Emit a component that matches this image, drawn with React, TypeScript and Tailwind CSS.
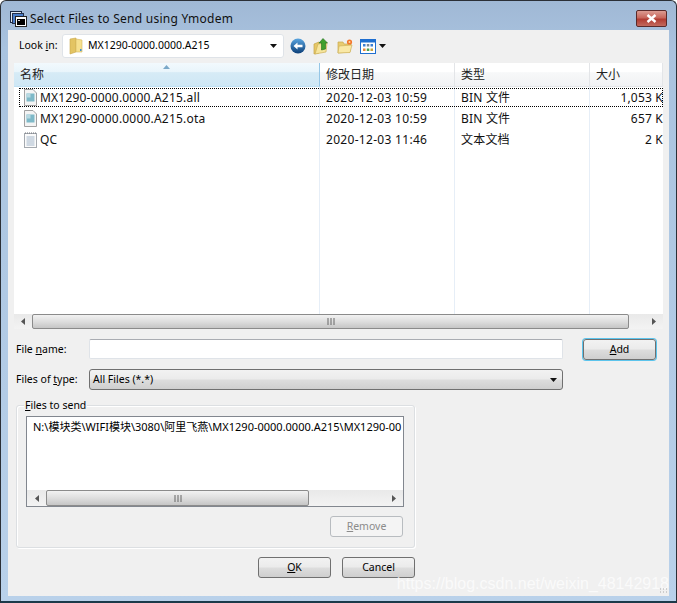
import type { ReactNode } from 'react';

type FileRow = {
    name: string
    date: string
    type: string
    size: string
    icon: 'bin' | 'text'
}

const files: FileRow[] = [
    { name: 'MX1290-0000.0000.A215.all', date: '2020-12-03 10:59', type: 'BIN 文件', size: '1,053 K', icon: 'bin' },
    { name: 'MX1290-0000.0000.A215.ota', date: '2020-12-03 10:59', type: 'BIN 文件', size: '657 K', icon: 'bin' },
    { name: 'QC', date: '2020-12-03 11:46', type: '文本文档', size: '2 K', icon: 'text' },
];

const columns = 'grid grid-cols-[306px_135px_135px_73px]';

const FolderIcon = () => (
    <svg width="14" height="18" viewBox="0 0 14 18">
        <path d="M1 2 L7 1 L7 15 L1 17 Z" fill="#e3c463" stroke="#c9a84a" strokeWidth="0.6" />
        <path d="M7 2 L13 3 L13 15 L7 15 Z" fill="#f6e08e" stroke="#d3b65e" strokeWidth="0.6" />
        <rect x="11" y="12" width="1.5" height="2" fill="#3d8fd0" />
    </svg>
);

const BackIcon = () => (
    <svg width="16" height="16" viewBox="0 0 16 16">
        <defs>
            <linearGradient id="back" x1="0" y1="0" x2="0" y2="1">
                <stop offset="0" stopColor="#5aa5e0" />
                <stop offset="1" stopColor="#0c3f78" />
            </linearGradient>
        </defs>
        <circle cx="8" cy="8" r="7.5" fill="url(#back)" />
        <path d="M3.5 8 L7.5 4.5 L7.5 6.8 L12.5 6.8 L12.5 9.2 L7.5 9.2 L7.5 11.5 Z" fill="#fff" />
    </svg>
);

const UpFolderIcon = () => (
    <svg width="16" height="17" viewBox="0 0 16 17">
        <path d="M1 6 L6 4 L6 15 L1 16 Z" fill="#e6c767" stroke="#c4a445" strokeWidth="0.7" />
        <path d="M5 6 L14 5 L13 14 L2 16 Z" fill="#f7e59c" stroke="#cdb058" strokeWidth="0.7" />
        <path d="M10 0.5 L14.5 5 L12.5 5 L12.5 11 L8.5 12 L8.5 5 L6 5 Z" fill="#3fa02e" stroke="#1f6d1c" strokeWidth="0.6" />
    </svg>
);

const NewFolderIcon = () => (
    <svg width="16" height="15" viewBox="0 0 16 15">
        <path d="M1 3 L6 3 L7 5 L14 5 L13 13 L1 14 Z" fill="#e8cb70" stroke="#c9aa4f" strokeWidth="0.7" />
        <path d="M2 7 L15 6 L13 13.5 L1 14 Z" fill="#f9e8a6" stroke="#d0b35c" strokeWidth="0.7" />
        <circle cx="12.5" cy="3" r="2.6" fill="#f2762b" />
        <circle cx="12.5" cy="3" r="1" fill="#ffd9a0" />
    </svg>
);

const ViewsIcon = () => (
    <svg width="16" height="15" viewBox="0 0 16 15">
        <rect x="0.5" y="0.5" width="15" height="14" fill="#fff" stroke="#1f6fd0" />
        <rect x="0.5" y="0.5" width="15" height="3" fill="#1f6fd0" />
        <rect x="3" y="5" width="2.5" height="2.5" fill="#3b7fd4" />
        <rect x="6.8" y="5" width="2.5" height="2.5" fill="#7a8796" />
        <rect x="10.5" y="5" width="2.5" height="2.5" fill="#3b7fd4" />
        <rect x="3" y="9.5" width="2.5" height="2.5" fill="#e8873a" />
        <rect x="6.8" y="9.5" width="2.5" height="2.5" fill="#4aa04a" />
        <rect x="10.5" y="9.5" width="2.5" height="2.5" fill="#c9a33a" />
    </svg>
);

const BinFileIcon = () => (
    <svg width="13" height="17" viewBox="0 0 13 17">
        <path d="M0.5 0.5 L9 0.5 L12.5 4 L12.5 16.5 L0.5 16.5 Z" fill="#f4f4f4" stroke="#a0a0a0" />
        <rect x="2.5" y="4.5" width="8" height="8" fill="#7fb9c8" />
        <rect x="2.5" y="4.5" width="4" height="4" fill="#b8d9e2" />
    </svg>
);

const TextFileIcon = () => (
    <svg width="13" height="16" viewBox="0 0 13 16">
        <rect x="0.5" y="1.5" width="12" height="14" fill="#fbfbfb" stroke="#a4a9af" />
        <path d="M1 1 H2 M3 1 H4 M5 1 H6 M7 1 H8 M9 1 H10 M11 1 H12" stroke="#70757b" />
        <path d="M2.5 5 H10.5 M2.5 7 H10.5 M2.5 9 H10.5 M2.5 11 H10.5 M2.5 13 H10.5" stroke="#a3b6ca" />
    </svg>
);

const AppIcon = () => (
    <svg width="17" height="16" viewBox="0 0 17 16">
        <rect x="0.5" y="0.5" width="11" height="11" fill="#dfe9f6" stroke="#1c2a44" />
        <rect x="2.5" y="2.5" width="11" height="10" fill="#4a7ecb" stroke="#24314c" />
        <rect x="5.5" y="5.5" width="11" height="10" fill="#fff" stroke="#222" />
        <rect x="7" y="8" width="8" height="6" fill="#000" />
        <rect x="8" y="9" width="2" height="1" fill="#ddd" />
    </svg>
);

const Caret = ({ left }: { left?: boolean }) => (
    <svg width="4" height="7" viewBox="0 0 4 7">
        <path d={left ? 'M4 0 L0 3.5 L4 7 Z' : 'M0 0 L4 3.5 L0 7 Z'} fill="#555" />
    </svg>
);

const DownCaret = () => (
    <svg width="7" height="4" viewBox="0 0 7 4">
        <path d="M0 0 H7 L3.5 4 Z" fill="#111" />
    </svg>
);

const Scrollbar = ({ buttonWidth, thumbWidth }: { buttonWidth: string; thumbWidth: string }) => (
    <div className="flex h-full items-stretch bg-gradient-to-b from-[#e9e9e9] to-[#f3f3f3]">
        <div className={`${buttonWidth} flex items-center justify-center`}><Caret left /></div>
        <div className={`${thumbWidth} flex items-center justify-center rounded-[2px] border border-[#8b8b8b] bg-gradient-to-b from-[#f2f2f2] via-[#dedede] to-[#c6c6c6]`}>
            <svg width="8" height="7" viewBox="0 0 8 7">
                <path d="M1 0 V7 M4 0 V7 M7 0 V7" stroke="#666" />
            </svg>
        </div>
        <div className="flex-1" />
        <div className="flex w-[18px] items-center justify-center"><Caret /></div>
    </div>
);

const DialogButton = ({ children, className = '' }: { children: ReactNode; className?: string }) => (
    <div className={`flex h-[21px] w-[73px] items-center justify-center rounded-[3px] border border-[#707070] bg-[linear-gradient(to_bottom,#f2f2f2_0%,#ebebeb_48%,#dddddd_52%,#cfcfcf_100%)] text-[10.5px] text-black ${className}`}>
        {children}
    </div>
);

const HeaderCell = ({ label, sorted }: { label: string; sorted?: boolean }) => (
    <div className={`relative flex h-[24px] items-center border-b pl-[6px] text-[12px] text-[#222] ${sorted
        ? 'border-r border-b-[#bfe0f3] border-r-[#95c6e6] bg-[linear-gradient(to_bottom,#f2f9fd_0%,#e9f5fb_38%,#d6ebf6_42%,#cfe7f5_100%)]'
        : 'border-r border-b-[#e3e5e8] border-r-[#e3e5e8] bg-[linear-gradient(to_bottom,#ffffff_0%,#ffffff_38%,#f7f8f9_42%,#f1f2f4_100%)]'}`}>
        {sorted && (
            <svg className="absolute left-[149px] top-[2px]" width="7" height="4" viewBox="0 0 7 4">
                <path d="M3.5 0 L7 4 H0 Z" fill="#7aa8c8" />
            </svg>
        )}
        {label}
    </div>
);

const App = () => {
    return (
        <div className="relative flex h-[603px] w-[677px] flex-col overflow-hidden rounded-t-[6px] border border-b-2 border-[#2b2f36] border-b-[#1c3a4a] bg-[linear-gradient(to_bottom,#a0b8d5_0%,#a9c3df_8%,#b9d1ea_100%)] px-[7px] pb-[5px] font-['Noto_Sans','Noto_Sans_CJK_SC',sans-serif] text-black">
            {/* title bar */}
            <div className="flex h-[29px] shrink-0 items-center pt-[6px]">
                <div className="ml-[2px] mr-[3px] flex"><AppIcon /></div>
                <span className="text-[12px] leading-none tracking-[0.25px] text-[#111]">Select Files to Send using Ymodem</span>
                <div className="ml-auto mr-[2px] flex h-[17px] w-[31px] items-center justify-center rounded-[2px] border border-[#5a2a2a] bg-[linear-gradient(to_bottom,#dc9c92_0%,#c8675c_45%,#b13c32_55%,#c26a5e_100%)]">
                    <svg width="11" height="9" viewBox="0 0 11 9">
                        <path d="M1.5 1 L9.5 8 M9.5 1 L1.5 8" stroke="#fff" strokeWidth="2.4" />
                    </svg>
                </div>
            </div>

            {/* client area */}
            <div className="flex flex-1 flex-col bg-[#f0f0f0] px-[6px] text-[10.5px]">
                {/* toolbar */}
                <div className="flex h-[33px] shrink-0 items-center pb-[1px]">
                    <span className="ml-[5px] w-[43px]">Look <u>i</u>n:</span>
                    <div className="flex h-[24px] w-[222px] items-center rounded-[3px] border border-[#dfe3e8] bg-white pl-[6px] pr-[4px]">
                        <FolderIcon />
                        <span className="ml-[5px] text-[10.5px]">MX1290-0000.0000.A215</span>
                        <span className="ml-auto mr-[2px] flex"><DownCaret /></span>
                    </div>
                    <span className="ml-[6px] flex"><BackIcon /></span>
                    <span className="ml-[7px] flex"><UpFolderIcon /></span>
                    <span className="ml-[8px] flex"><NewFolderIcon /></span>
                    <span className="ml-[7px] flex"><ViewsIcon /></span>
                    <span className="ml-[3px] flex"><DownCaret /></span>
                </div>

                {/* file list */}
                <div className="flex h-[251px] w-[649px] shrink-0 flex-col bg-white">
                    <div className={columns}>
                        <HeaderCell label="名称" sorted />
                        <HeaderCell label="修改日期" />
                        <HeaderCell label="类型" />
                        <HeaderCell label="大小" />
                    </div>
                    {files.map((file, index) => (
                        <div key={file.name} className={`${columns} relative ${index === 2 ? 'h-[22px]' : 'h-[21px]'} text-[12px] tracking-[0.2px] text-[#111]`}>
                            {index === 0 && <div className="absolute bottom-[1px] left-[5px] right-0 top-[1px] border border-dotted border-black" />}
                            <div className="flex items-center border-r border-[#e6eef7] pl-[10px]">
                                {file.icon === 'bin' ? <BinFileIcon /> : <TextFileIcon />}
                                <span className="ml-[3px]">{file.name}</span>
                            </div>
                            <div className="flex items-center border-r border-[#e6eef7] pl-[6px] tracking-[0.3px]">{file.date}</div>
                            <div className="flex items-center border-r border-[#e6eef7] pl-[6px]">{file.type}</div>
                            <div className="flex items-center justify-end">{file.size}</div>
                        </div>
                    ))}
                    <div className={`${columns} flex-1`}>
                        <div className="border-r border-[#e6eef7]" />
                        <div className="border-r border-[#e6eef7]" />
                        <div className="border-r border-[#e6eef7]" />
                        <div />
                    </div>
                </div>
                <div className="h-[15px] w-[649px] shrink-0">
                    <Scrollbar buttonWidth="w-[18px]" thumbWidth="w-[597px]" />
                </div>

                {/* file name and type */}
                <div className="mt-[10px] flex h-[21px] shrink-0 items-center">
                    <span className="ml-[2px] w-[73px]">File <u>n</u>ame:</span>
                    <div className="h-[20px] w-[474px] self-start rounded-[2px] border border-[#dfe3e8] border-t-[#a9acb2] bg-white" />
                    <DialogButton className="ml-[20px] border-[#3c9fd0] bg-[linear-gradient(to_bottom,#eaf6fb_0%,#dcedf4_48%,#c6dae3_52%,#bcd2dd_100%)] shadow-[0_0_0_1px_#5cc4ec]"><span><u>A</u>dd</span></DialogButton>
                </div>
                <div className="mt-[9px] flex h-[21px] shrink-0 items-center">
                    <span className="ml-[2px] w-[73px]">Files of <u>t</u>ype:</span>
                    <div className="flex h-[21px] w-[474px] items-center rounded-[3px] border border-[#707070] bg-[linear-gradient(to_bottom,#f2f2f2_0%,#ebebeb_48%,#dddddd_52%,#cfcfcf_100%)] pl-[3px] pr-[5px]">
                        <span>All Files (*.*)</span>
                        <span className="ml-auto flex"><DownCaret /></span>
                    </div>
                </div>

                {/* files to send */}
                <div className="relative ml-[2px] mt-[15px] h-[143px] w-[399px] shrink-0 rounded-[3px] border border-[#dcdfe2] pl-[9px] pt-[10px] shadow-[inset_1px_1px_0_#fff,1px_1px_0_#fff]">
                    <span className="absolute -top-[8px] left-[7px] bg-[#f0f0f0] px-[1px] leading-[14px]"><u>F</u>iles to send</span>
                    <div className="flex h-[91px] w-[378px] flex-col border border-[#82878f] bg-white">
                        <div className="flex-1 overflow-hidden whitespace-nowrap pl-[6px] pr-[1px] pt-[1px] text-[11px] leading-[18px]">
                            N:\模块类\WIFI模块\3080\阿里飞燕\MX1290-0000.0000.A215\MX1290-00
                        </div>
                        <div className="h-[16px] shrink-0">
                            <Scrollbar buttonWidth="w-[19px]" thumbWidth="w-[263px]" />
                        </div>
                    </div>
                    <div className="ml-[304px] mt-[9px] flex h-[21px] w-[73px] items-center justify-center rounded-[3px] border border-[#b8bcc0] bg-[#f4f4f4] text-[10.5px] text-[#8b8b8b]">
                        <span><u>R</u>emove</span>
                    </div>
                </div>

                {/* ok and cancel */}
                <div className="mt-[9px] flex shrink-0 pl-[244px]">
                    <DialogButton><span><u>O</u>K</span></DialogButton>
                    <DialogButton className="ml-[11px]">Cancel</DialogButton>
                </div>
            </div>

            {/* blog watermark and resize grip over the dialog */}
            <span className="absolute bottom-[8px] right-[7px] whitespace-nowrap font-['Liberation_Sans',sans-serif] text-[16px] leading-[18px] text-[#ffffff] opacity-70">https://blog.csdn.net/weixin_48142918</span>
            <svg className="absolute bottom-[8px] right-[8px]" width="9" height="5" viewBox="0 0 9 5">
                <path d="M1 1 H2 M4 1 H5 M7 1 H8 M1 4 H2 M4 4 H5 M7 4 H8" stroke="#a8a8a8" />
            </svg>
        </div>
    );
};

export default App;
